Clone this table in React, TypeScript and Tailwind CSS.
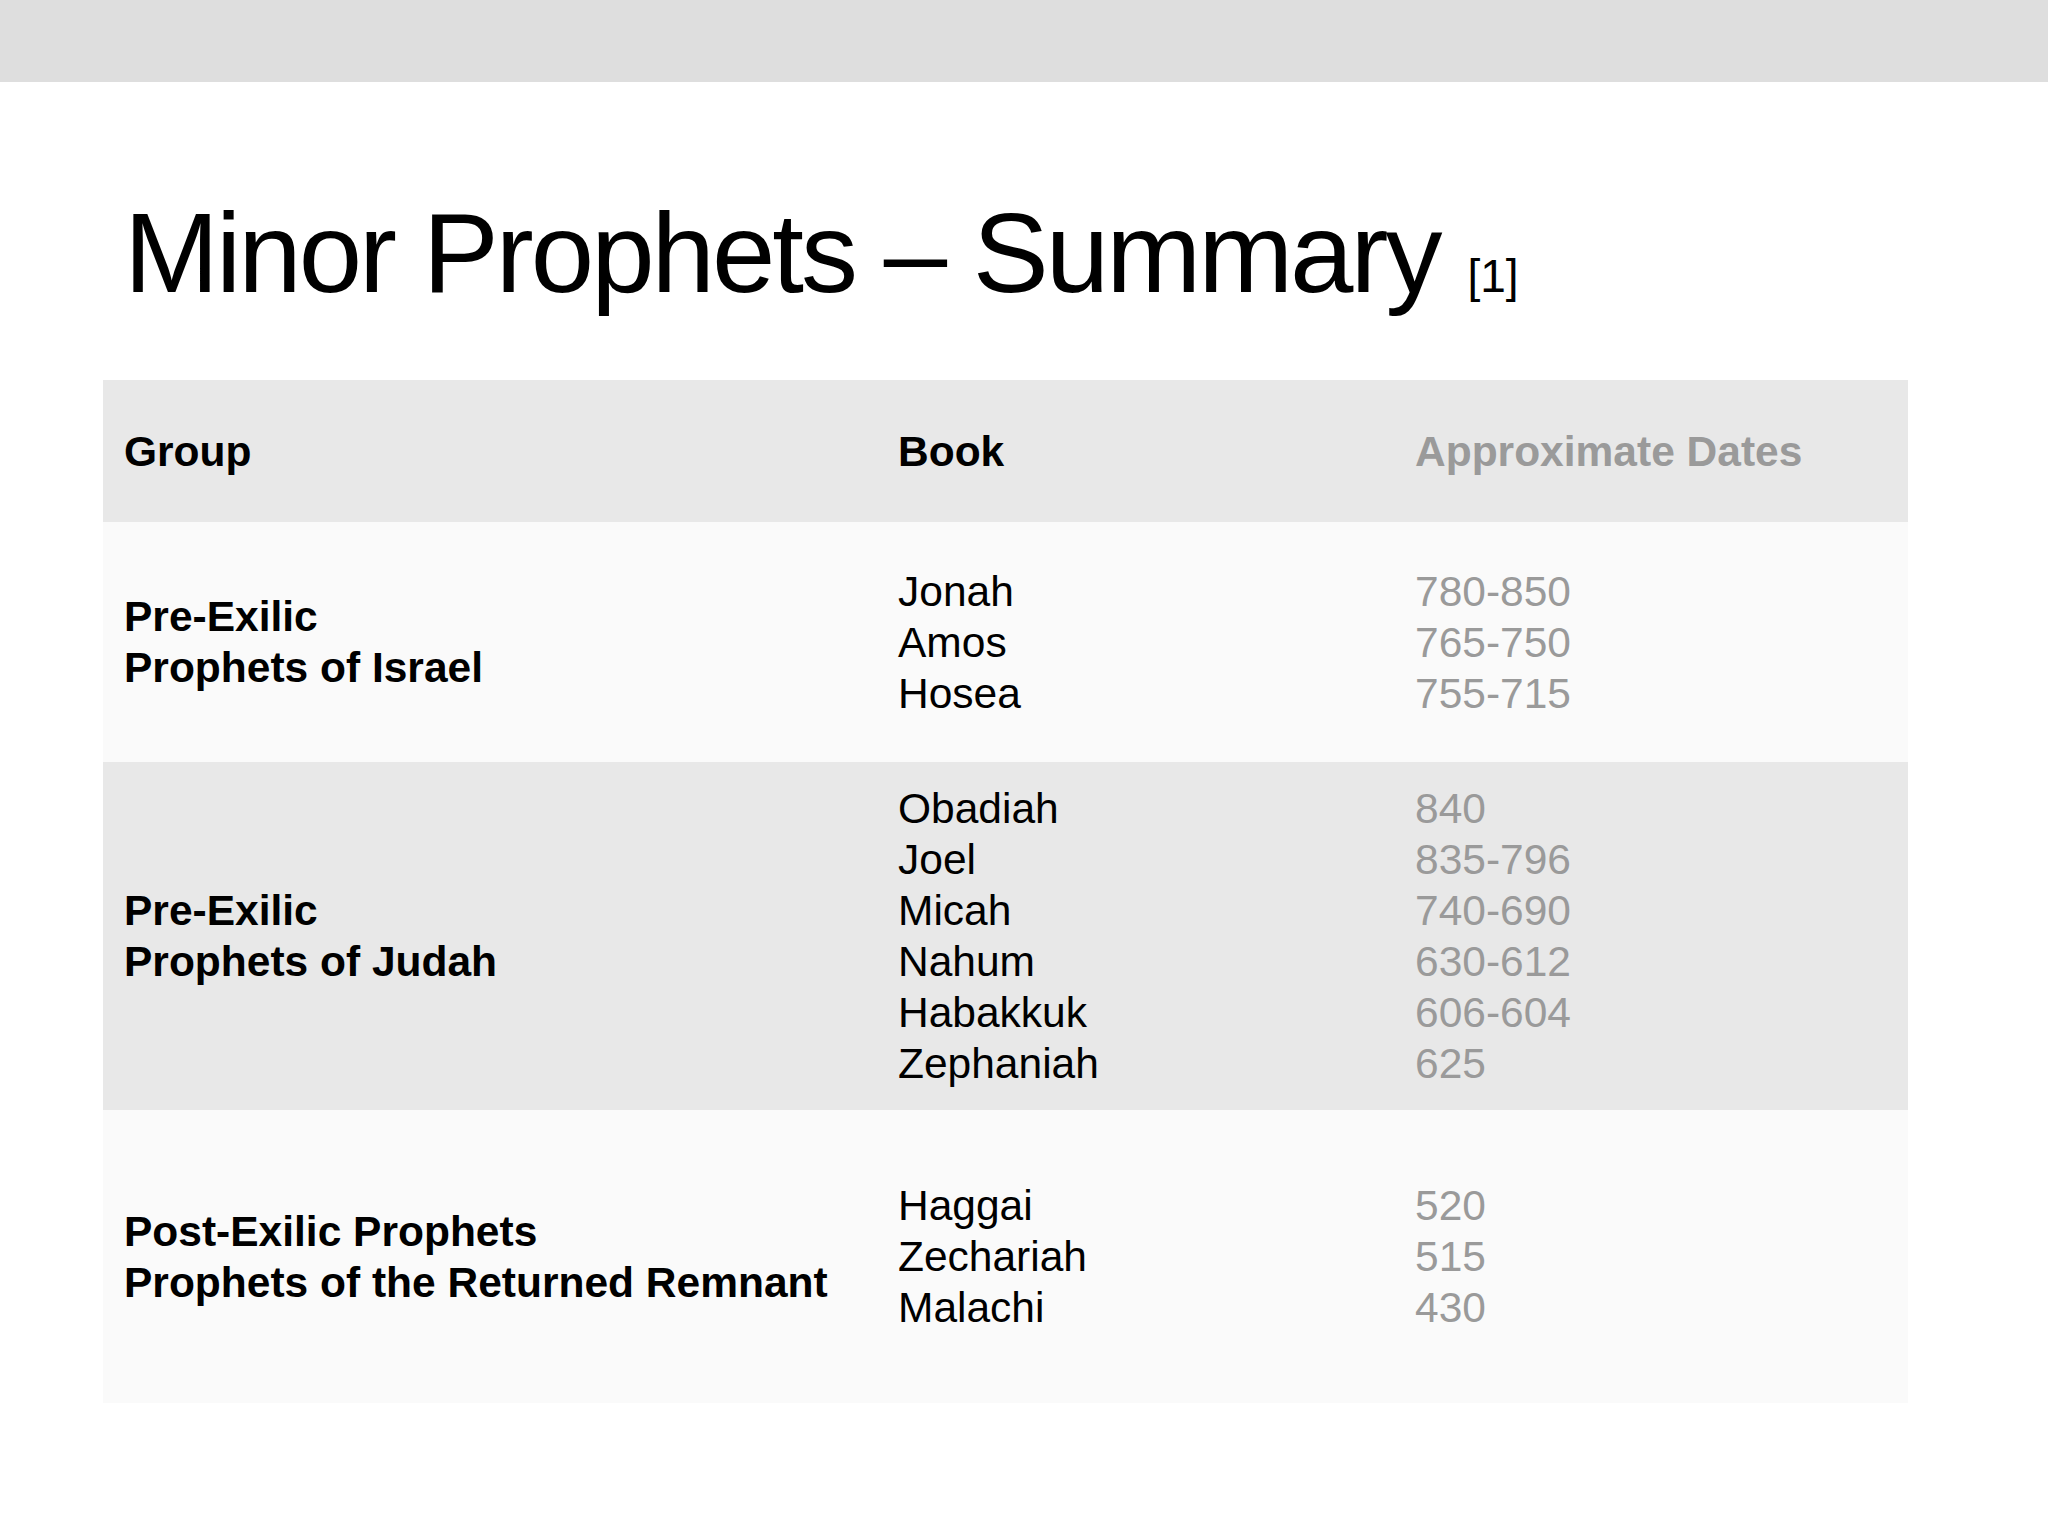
import React from "react";

const rows = [
  {
    group: ["Pre-Exilic", "Prophets of Israel"],
    books: ["Jonah", "Amos", "Hosea"],
    dates: ["780-850", "765-750", "755-715"],
    h: "h-[240px]",
    bg: "bg-[#fafafa]",
  },
  {
    group: ["Pre-Exilic", "Prophets of Judah"],
    books: ["Obadiah", "Joel", "Micah", "Nahum", "Habakkuk", "Zephaniah"],
    dates: ["840", "835-796", "740-690", "630-612", "606-604", "625"],
    h: "h-[348px]",
    bg: "bg-[#e8e8e8]",
  },
  {
    group: ["Post-Exilic Prophets", "Prophets of the Returned Remnant"],
    books: ["Haggai", "Zechariah", "Malachi"],
    dates: ["520", "515", "430"],
    h: "h-[293px]",
    bg: "bg-[#fafafa]",
  },
];

export default function App() {
  return (
    <div
      className="w-[2048px] h-[1536px] bg-white text-black overflow-hidden"
      style={{ fontFamily: '"Liberation Sans", Arial, sans-serif' }}
    >
      <div className="h-[82px] bg-[#dedede]" />
      <div className="pl-[124px] pt-[114px] h-[298px]">
        <h1 className="text-[114px] leading-[114px] tracking-[-3px] font-normal whitespace-nowrap">
          Minor Prophets – Summary
          <span className="text-[46px] leading-none tracking-normal ml-[28px]">[1]</span>
        </h1>
      </div>
      <div className="ml-[103px] w-[1805px] text-[42.5px] leading-[51px]">
        <div className="grid grid-cols-[774px_517px_1fr] h-[142px] bg-[#e8e8e8] font-bold">
          <div className="flex items-center px-[21px]">Group</div>
          <div className="flex items-center px-[21px]">Book</div>
          <div className="flex items-center px-[21px] text-[#9a9a9a]">Approximate Dates</div>
        </div>
        {rows.map((r, i) => (
          <div key={i} className={`grid grid-cols-[774px_517px_1fr] ${r.h} ${r.bg}`}>
            <div className="flex flex-col justify-center px-[21px] font-bold whitespace-nowrap">
              {r.group.map((g) => (
                <div key={g}>{g}</div>
              ))}
            </div>
            <div className="flex flex-col justify-center px-[21px]">
              {r.books.map((b) => (
                <div key={b}>{b}</div>
              ))}
            </div>
            <div className="flex flex-col justify-center px-[21px] text-[#9a9a9a]">
              {r.dates.map((d, j) => (
                <div key={j}>{d}</div>
              ))}
            </div>
          </div>
        ))}
      </div>
    </div>
  );
}
